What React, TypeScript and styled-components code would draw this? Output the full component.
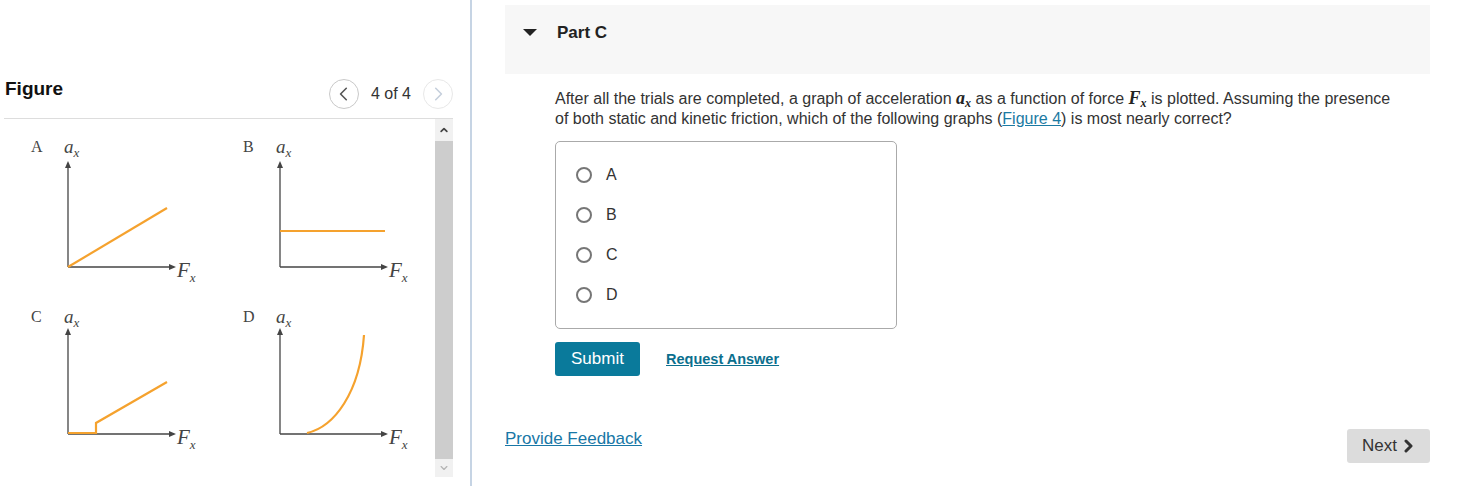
import React from 'react';
import styled, { createGlobalStyle } from 'styled-components';

const GlobalStyle = createGlobalStyle`
  *, *::before, *::after { box-sizing: border-box; }
  html, body { margin: 0; padding: 0; background: #fff; }
  body {
    font-family: "Liberation Sans", Arial, sans-serif;
    color: #333;
  }
`;

const Page = styled.div`
  display: flex;
  width: 1457px;
  height: 497px;
  overflow: hidden;
`;

/* ---------- figure panel ---------- */

const FigurePanel = styled.section`
  width: 470px;
  flex-shrink: 0;
  padding: 0 17px 0 4px;
`;

const FigureHeader = styled.header`
  display: flex;
  align-items: center;
  height: 50px;
  margin-top: 69px;
  border-bottom: 1px solid #ddd;
`;

const FigureTitle = styled.h2`
  flex: 1;
  margin: 0 0 9px 1px;
  font-size: 19px;
  font-weight: bold;
  color: #111;
`;

const Pager = styled.div`
  display: flex;
  align-items: center;
  gap: 12px;
`;

const PageButton = styled.button<{ $disabled?: boolean }>`
  display: grid;
  place-items: center;
  width: 30px;
  height: 30px;
  padding: 0;
  border-radius: 50%;
  border: 1px solid ${(p) => (p.$disabled ? '#e8e8e8' : '#c9c9c9')};
  background: #fff;
  cursor: ${(p) => (p.$disabled ? 'default' : 'pointer')};
`;

const PageCount = styled.span`
  font-size: 16px;
  color: #333;
`;

const FigureBody = styled.div`
  display: flex;
  height: 358px;
`;

const GraphGrid = styled.div`
  flex: 1;
  display: grid;
  grid-template-columns: 212px 212px;
  grid-auto-rows: 167px;
  align-content: start;
  padding-top: 5px;
`;

const Scrollbar = styled.div`
  display: flex;
  flex-direction: column;
  width: 18px;
`;

const ScrollButton = styled.div<{ $h: number }>`
  display: grid;
  place-items: center;
  height: ${(p) => p.$h}px;
  background: #f1f1f1;
`;

const ScrollThumb = styled.div`
  flex: 1;
  background: #cdcdcd;
`;

const Divider = styled.div`
  width: 2px;
  height: 486px;
  flex-shrink: 0;
  background: #c6d4e4;
`;

/* ---------- question panel ---------- */

const QuestionPanel = styled.section`
  flex: 1;
  padding: 5px 27px 0 33px;
`;

const PartHeader = styled.div`
  display: flex;
  align-items: flex-start;
  gap: 20px;
  height: 69px;
  padding: 18px 0 0 18px;
  background: #f7f7f7;
`;

const Caret = styled.span`
  width: 0;
  height: 0;
  margin-top: 6px;
  border-left: 7px solid transparent;
  border-right: 7px solid transparent;
  border-top: 7px solid #222;
`;

const PartTitle = styled.h3`
  margin: 0;
  font-size: 17px;
  line-height: 19px;
  font-weight: bold;
  color: #222;
`;

const Prompt = styled.p`
  margin: 15px 30px 0 50px;
  font-size: 16px;
  line-height: 20px;
  color: #333;
`;

const MathVar = styled.span`
  font-family: "Liberation Serif", "Times New Roman", serif;
  font-style: italic;
  font-weight: bold;
  font-size: 18px;
  line-height: 1;
  color: #222;

  sub {
    font-size: 12px;
    line-height: 1;
    vertical-align: -3px;
  }
`;

const InlineLink = styled.a`
  color: #1a7aa3;
  text-decoration: underline;
`;

const Options = styled.fieldset`
  display: flex;
  flex-direction: column;
  width: 342px;
  height: 188px;
  margin: 12px 0 0 50px;
  padding: 13px 20px;
  border: 1px solid #aaa;
  border-radius: 5px;
`;

const Option = styled.label`
  display: flex;
  align-items: center;
  gap: 14px;
  height: 40px;
  font-size: 16px;
  color: #333;
`;

const Radio = styled.span`
  width: 16px;
  height: 16px;
  border-radius: 50%;
  border: 2px solid #767676;
  background: #fff;
`;

const Actions = styled.div`
  display: flex;
  align-items: center;
  gap: 26px;
  margin: 13px 0 0 50px;
`;

const SubmitButton = styled.button`
  width: 85px;
  height: 34px;
  border: none;
  border-radius: 3px;
  background: #0a7a9b;
  color: #fff;
  font-family: inherit;
  font-size: 17px;
`;

const RequestLink = styled.a`
  font-size: 14.5px;
  font-weight: bold;
  color: #0b6f8e;
  text-decoration: underline;
`;

const Footer = styled.div`
  display: flex;
  justify-content: space-between;
  align-items: flex-start;
  margin-top: 53px;
`;

const FeedbackLink = styled.a`
  font-size: 17px;
  line-height: 19px;
  color: #1877a6;
  text-decoration: underline;
`;

const NextButton = styled.button`
  display: flex;
  align-items: center;
  justify-content: center;
  gap: 4px;
  width: 83px;
  height: 34px;
  border: none;
  border-radius: 3px;
  background: #dcdcdc;
  color: #333;
  font-family: inherit;
  font-size: 17px;
`;

/* ---------- graphs ---------- */

const AXIS = '#444';
const CURVE = '#f5a22e';

const Graph: React.FC<{ letter: string; curve: string; labelY: number }> = ({
  letter,
  curve,
  labelY,
}) => (
  <svg width="212" height="167" viewBox="0 0 212 167">
    <text
      x="27"
      y={labelY}
      fontFamily="Liberation Serif, serif"
      fontSize="16"
      fill="#444"
    >
      {letter}
    </text>
    <text
      x="60"
      y={labelY + 1}
      fontFamily="Liberation Serif, serif"
      fontStyle="italic"
      fontSize="19"
      fill="#444"
    >
      a
      <tspan fontSize="13" dy="4">
        x
      </tspan>
    </text>
    <line x1="64" y1="41" x2="64" y2="143" stroke={AXIS} strokeWidth="1.3" />
    <polygon points="64,37 61,44 67,44" fill={AXIS} />
    <line x1="64" y1="143" x2="168" y2="143" stroke={AXIS} strokeWidth="1.3" />
    <polygon points="172,143 165,140 165,146" fill={AXIS} />
    <text
      x="173"
      y="153"
      fontFamily="Liberation Serif, serif"
      fontStyle="italic"
      fontSize="21"
      fill="#444"
    >
      F
      <tspan fontSize="13" dy="5">
        x
      </tspan>
    </text>
    <path d={curve} fill="none" stroke={CURVE} strokeWidth="2.2" />
  </svg>
);

const graphs = [
  { letter: 'A', labelY: 28, curve: 'M64 143 L163 84' },
  { letter: 'B', labelY: 28, curve: 'M64 107 L169 107' },
  { letter: 'C', labelY: 31, curve: 'M64 142 L92 142 L92 132 L163 91' },
  { letter: 'D', labelY: 31, curve: 'M91 142 C118 136 144 102 148 44' },
];

const Chevron: React.FC<{ dir: 'left' | 'right' | 'up' | 'down'; color: string; size?: number; width?: number }> = ({
  dir,
  color,
  size = 14,
  width = 1.6,
}) => {
  const pts = {
    left: '9,2 4,7 9,12',
    right: '5,2 10,7 5,12',
    up: '3,9 7,5 11,9',
    down: '3,5 7,9 11,5',
  }[dir];
  return (
    <svg width={size} height={size} viewBox="0 0 14 14">
      <polyline points={pts} fill="none" stroke={color} strokeWidth={width} strokeLinecap="round" strokeLinejoin="round" />
    </svg>
  );
};

export default function App() {
  return (
    <Page>
      <GlobalStyle />
      <FigurePanel>
        <FigureHeader>
          <FigureTitle>Figure</FigureTitle>
          <Pager>
            <PageButton aria-label="Previous figure">
              <Chevron dir="left" color="#555" size={16} width={1.4} />
            </PageButton>
            <PageCount>4 of 4</PageCount>
            <PageButton $disabled aria-label="Next figure">
              <Chevron dir="right" color="#c5cfdc" size={16} width={1.4} />
            </PageButton>
          </Pager>
        </FigureHeader>
        <FigureBody>
          <GraphGrid>
            {graphs.map((g) => (
              <Graph key={g.letter} {...g} />
            ))}
          </GraphGrid>
          <Scrollbar>
            <ScrollButton $h={22}>
              <Chevron dir="up" color="#444" size={10} width={2.4} />
            </ScrollButton>
            <ScrollThumb />
            <ScrollButton $h={18}>
              <Chevron dir="down" color="#b5b5b5" size={10} width={1.8} />
            </ScrollButton>
          </Scrollbar>
        </FigureBody>
      </FigurePanel>

      <Divider />

      <QuestionPanel>
        <PartHeader>
          <Caret />
          <PartTitle>Part C</PartTitle>
        </PartHeader>

        <Prompt>
          After all the trials are completed, a graph of acceleration{' '}
          <MathVar>
            a<sub>x</sub>
          </MathVar>{' '}
          as a function of force{' '}
          <MathVar>
            F<sub>x</sub>
          </MathVar>{' '}
          is plotted. Assuming the presence of both static and kinetic friction, which of
          the following graphs (<InlineLink href="#">Figure 4</InlineLink>) is most nearly
          correct?
        </Prompt>

        <Options>
          {['A', 'B', 'C', 'D'].map((o) => (
            <Option key={o}>
              <Radio />
              {o}
            </Option>
          ))}
        </Options>

        <Actions>
          <SubmitButton>Submit</SubmitButton>
          <RequestLink href="#">Request Answer</RequestLink>
        </Actions>

        <Footer>
          <FeedbackLink href="#">Provide Feedback</FeedbackLink>
          <NextButton>
            Next
            <Chevron dir="right" color="#333" size={14} width={3} />
          </NextButton>
        </Footer>
      </QuestionPanel>
    </Page>
  );
}
